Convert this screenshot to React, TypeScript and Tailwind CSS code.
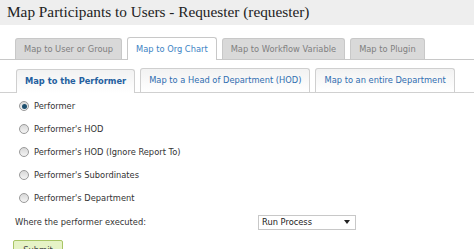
import React from "react";

const topTabs = [
  { label: "Map to User or Group", active: false },
  { label: "Map to Org Chart", active: true },
  { label: "Map to Workflow Variable", active: false },
  { label: "Map to Plugin", active: false },
];

const subTabs = [
  { label: "Map to the Performer", active: true },
  { label: "Map to a Head of Department (HOD)", active: false },
  { label: "Map to an entire Department", active: false },
];

const options = [
  "Performer",
  "Performer's HOD",
  "Performer's HOD (Ignore Report To)",
  "Performer's Subordinates",
  "Performer's Department",
];

function Radio({ checked }: { checked: boolean }) {
  return (
    <span className="flex h-[10px] w-[10px] items-center justify-center rounded-full border border-[#9a9a9a] bg-gradient-to-b from-[#d8d8d8] to-[#f4f4f4]">
      {checked && <span className="h-[5px] w-[5px] rounded-full bg-[#1d4f6e]" />}
    </span>
  );
}

export default function App() {
  return (
    <div className="h-[249px] w-[474px] overflow-hidden bg-white font-['DejaVu_Sans',sans-serif] text-[8.3px] text-[#333]">
      <div className="flex h-[25px] items-center bg-[#eeeeee] pl-[7px] font-['Liberation_Serif',serif] text-[15.3px] text-[#222]">
        Map Participants to Users - Requester (requester)
      </div>

      <div className="mt-[12px] flex items-end gap-[5px] border-b border-[#c8c8c8] pl-[15px]">
        {topTabs.map(t => (
          <div
            key={t.label}
            className={
              t.active
                ? "-mb-px rounded-t-[3px] border border-b-0 border-[#c8c8c8] bg-white px-[8px] pb-[5px] pt-[5px] text-[#3d83c4]"
                : "rounded-t-[3px] border border-b-0 border-[#c8c8c8] bg-[#d9d9d9] px-[8px] pb-[4px] pt-[4px] text-[#808080]"
            }
          >
            {t.label}
          </div>
        ))}
      </div>

      <div className="pt-[8px]">
        <div className="flex items-end gap-[5px] border-b border-[#d0d0d0] pl-[16px]">
          {subTabs.map(s => (
            <div
              key={s.label}
              className={`rounded-t-[3px] border border-b-0 border-[#cfcfcf] bg-gradient-to-b from-[#f2f2f2] to-white px-[8px] pb-[5px] pt-[5px] text-[#2f6db0] ${s.active ? "-mb-px bg-white font-bold text-[#24609f]" : ""}`}
            >
              {s.label}
            </div>
          ))}
        </div>

        <div className="flex flex-col gap-[12px] pl-[19px] pt-[8px]">
          {options.map((o, i) => (
            <label key={o} className="flex items-center gap-[5px] leading-[11px]">
              <Radio checked={i === 0} />
              <span>{o}</span>
            </label>
          ))}
        </div>

        <div className="mt-[11px] flex items-center pl-[15px]">
          <span className="w-[243px]">Where the performer executed:</span>
          <div className="flex h-[15px] w-[98px] items-center justify-between border border-[#c8c8c8] bg-white pl-[3px] pr-[5px] text-[#222]">
            <span>Run Process</span>
            <svg width="6" height="4" viewBox="0 0 6 4">
              <path d="M0 0 L6 0 L3 4 Z" fill="#222" />
            </svg>
          </div>
        </div>

        <div className="mt-[10px] pl-[13px]">
          <button className="h-[20px] w-[50px] rounded-[2px] border border-[#a9c566] bg-[#e6f3c6] text-[#444]">
            Submit
          </button>
        </div>
      </div>
    </div>
  );
}
